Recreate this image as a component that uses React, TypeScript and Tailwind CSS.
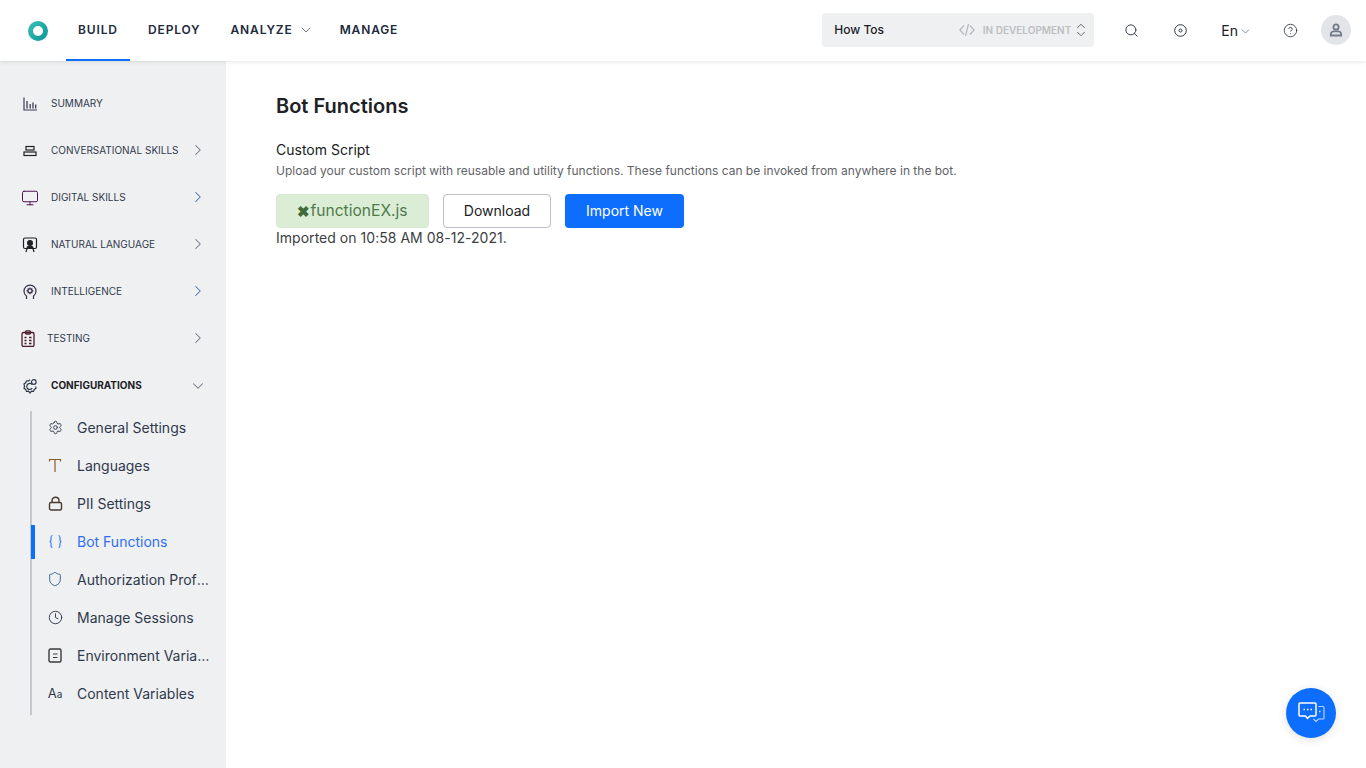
import React from "react";
import {
  ChevronDown,
  ChevronRight,
  ChevronUp,
  Clock,
  HelpCircle,
  Monitor,
  Search,
  Settings,
  Shield,
} from "lucide-react";

const stroke = { strokeWidth: 1.2, fill: "none", stroke: "currentColor" };

const SummaryIcon = () => (
  <svg width="16" height="16" viewBox="0 0 16 16" {...stroke}>
    <path d="M2 1.500V14h13" />
    <path d="M5 5v7.500M8.200 8v4.500M11 6.500v6M13.700 8.500v4" strokeWidth="1.300" />
  </svg>
);

const StackIcon = () => (
  <svg width="14" height="14" viewBox="0 0 14 14" {...stroke}>
    <rect x="3" y="2.500" width="8" height="3.500" />
    <rect x="1" y="8" width="12" height="3.500" />
  </svg>
);

const PresenterIcon = () => (
  <svg width="16" height="16" viewBox="0 0 16 16" {...stroke}>
    <rect x="1.500" y="1" width="13" height="10.500" rx="1.500" />
    <circle cx="8" cy="6" r="2.400" fill="currentColor" />
    <path d="M4 15 5 11.500M12 15 11 11.500" />
    <path d="M5 11.500c0-1.500 1.300-2.300 3-2.300s3 .8 3 2.300z" fill="currentColor" />
  </svg>
);

const HeadIcon = () => (
  <svg width="14" height="16" viewBox="0 0 14 16" {...stroke}>
    <path d="M3.500 15v-3C2 11 1 9.300 1 7.200 1 3.800 3.600 1.200 7 1.200s6 2.600 6 6c0 2.100-1 3.800-2.500 4.800v3" />
    <circle cx="7" cy="6.800" r="2" />
    <path d="M7 3.400v1.400M7 8.800v1.400M3.600 6.800H5M9 6.800h1.400M4.700 4.500l1 1M8.300 8.100l1 1M9.300 4.500l-1 1M5.700 8.100l-1 1" />
  </svg>
);

const ClipboardIcon = () => (
  <svg width="14" height="17" viewBox="0 0 14 17" strokeWidth="1.300" fill="none" stroke="currentColor">
    <rect x="1" y="2.500" width="12" height="14" rx="1.500" />
    <rect x="4.500" y="0.800" width="5" height="3.200" rx="1" />
    <path d="M3.500 7.500h2M8 7.500h2.500M3.500 10.500h2M8 10.500h2.500M3.500 13.500h2M8 13.500h2.500" />
  </svg>
);

const ConfigIcon = () => (
  <svg width="16" height="16" viewBox="0 0 16 16" {...stroke}>
    <path d="M8 1.800 6.500 3 4.500 2.800 3.700 4.800 2 6 2.500 8.200 2 10.200 3.700 11.400 4.500 13.400 6.500 13.200 8 15 9.500 13.200 11.500 13.400 12.300 11.400 14 10.200 13.700 8.500" />
    <path d="M10.200 6.700A3 3 0 1 0 10.200 10.200" />
    <circle cx="11.800" cy="4" r="2.300" />
  </svg>
);

const TallTIcon = () => (
  <svg width="16" height="16" viewBox="0 0 16 16" fill="none" stroke="currentColor" strokeWidth="1.200">
    <path d="M2.500 4.500V2.500h11v2M8 2.500v12.500" />
  </svg>
);

const LockIcon = () => (
  <svg width="15" height="15" viewBox="0 0 15 15" fill="none" stroke="currentColor" strokeWidth="1.400">
    <rect x="1.500" y="6.500" width="12" height="7.500" rx="1.500" />
    <path d="M4 6.500V4.700C4 2.700 5.500 1.200 7.500 1.200s3.500 1.500 3.500 3.500v1.800" />
  </svg>
);

const NoteIcon = () => (
  <svg width="14" height="15" viewBox="0 0 14 15" fill="none" stroke="currentColor" strokeWidth="1.400">
    <rect x="1" y="1" width="12" height="13" rx="1.500" />
    <path d="M5 6h4.500M5 9.500h4.500" strokeWidth="1.100" />
  </svg>
);

const BracesIcon = () => (
  <svg width="15" height="15" viewBox="0 0 15 15" fill="none" stroke="currentColor" strokeWidth="1.200">
    <path d="M4.500 1.500C3 1.500 3 2.500 3 3.500v2.300C3 6.600 2.500 7.500 1.500 7.500c1 0 1.500.9 1.500 1.700v2.300c0 1 0 2 1.500 2" />
    <path d="M10.500 1.500c1.500 0 1.500 1 1.500 2v2.300c0 .8.500 1.700 1.500 1.700-1 0-1.500.9-1.500 1.700v2.300c0 1 0 2-1.500 2" />
  </svg>
);

const LogoMark = () => (
  <svg width="20" height="20" viewBox="0 0 20 20">
    <defs>
      <linearGradient id="ring" x1="0" y1="0" x2="1" y2="1">
        <stop offset="0" stopColor="#35bcb4" />
        <stop offset="1" stopColor="#0d9a9c" />
      </linearGradient>
    </defs>
    <circle cx="10" cy="10" r="7.500" fill="none" stroke="url(#ring)" strokeWidth="5" />
  </svg>
);

const CodeIcon = () => (
  <svg width="16" height="14" viewBox="0 0 16 14" fill="none" stroke="currentColor" strokeWidth="1.200">
    <path d="M5 2.500.9 7 5 11.500M11 2.500 15.100 7 11 11.500M9.500 1 6.500 13" />
  </svg>
);

const DiscIcon = () => (
  <svg width="13" height="13" viewBox="0 0 13 13" fill="none" stroke="currentColor" strokeWidth="1">
    <circle cx="6.500" cy="6.500" r="5.800" />
    <circle cx="6.500" cy="6.500" r="1.500" />
  </svg>
);

const UserIcon = () => (
  <svg width="14" height="14" viewBox="0 0 14 14" fill="none" stroke="currentColor" strokeWidth="1.800">
    <circle cx="7" cy="4" r="2.600" />
    <path d="M1.800 12.500V11c0-1.500 1.500-2.700 3-2.700h4.400c1.500 0 3 1.200 3 2.700v1.500z" />
  </svg>
);

const ChatIcon = () => (
  <svg width="27" height="22" viewBox="0 0 27 22" fill="none" stroke="currentColor">
    <path d="M2 1h15a1 1 0 0 1 1 1v11a1 1 0 0 1-1 1h-5l-2.500 2.500L7.500 14H2a1 1 0 0 1-1-1V2a1 1 0 0 1 1-1z" strokeWidth="1.500" />
    <path d="M5.500 7.500h1.500M9 7.500h1.500M12.500 7.500H14" strokeWidth="1.500" />
    <path d="M20.500 4.500H25a1 1 0 0 1 1 1V16a1 1 0 0 1-1 1h-4.500L18 19.500 15.500 17" strokeWidth="1.200" opacity="0.7" />
    <path d="M21 9.500h1.500" strokeWidth="1.500" opacity="0.8" />
  </svg>
);

const mainItems = [
  { label: "SUMMARY", icon: <SummaryIcon />, color: "text-[#3a3f55]" },
  { label: "CONVERSATIONAL SKILLS", icon: <StackIcon />, arrow: "text-[#6b7280]", color: "text-[#202124]" },
  { label: "DIGITAL SKILLS", icon: <Monitor size={18} strokeWidth={1.3} />, arrow: "text-[#3f6fb5]", color: "text-[#4a0f4f]" },
  { label: "NATURAL LANGUAGE", icon: <PresenterIcon />, arrow: "text-[#6b7280]", color: "text-[#202124]" },
  { label: "INTELLIGENCE", icon: <HeadIcon />, arrow: "text-[#3f6fb5]", color: "text-[#3a3050]" },
  { label: "TESTING", icon: <ClipboardIcon />, arrow: "text-[#6b7280]", color: "text-[#4a1c28]", tight: true },
];

const subItems = [
  { label: "General Settings", icon: <Settings size={15} strokeWidth={1.5} /> },
  { label: "Languages", icon: <TallTIcon />, color: "text-[#8a5a2b]" },
  { label: "PII Settings", icon: <LockIcon />, color: "text-[#4a3a30]" },
  { label: "Bot Functions", icon: <BracesIcon />, active: true },
  { label: "Authorization Profiles", icon: <Shield size={16} strokeWidth={1.4} />, color: "text-[#2f5f8a]" },
  { label: "Manage Sessions", icon: <Clock size={15} strokeWidth={1.5} /> },
  { label: "Environment Variables", icon: <NoteIcon />, color: "text-[#3a3a3a]" },
  { label: "Content Variables", icon: <span className="text-[13px] leading-none">A<span className="text-[10px]">a</span></span> },
];

const Header = () => (
  <header className="relative z-10 flex h-[61px] shrink-0 items-center bg-white pl-[28px] pr-[15px] shadow-[0_1px_4px_rgba(0,0,0,0.1)]">
    <LogoMark />
    <nav className="ml-[18px] flex h-full items-center text-[12px] font-semibold tracking-[0.85px] text-[#202a3d]">
      <a className="flex h-full w-[64px] items-center justify-center border-b-2 border-[#0d6efd]">BUILD</a>
      <a className="mb-[2px] ml-[18px]">DEPLOY</a>
      <a className="mb-[2px] ml-[30px] flex items-center gap-[5px]">
        ANALYZE
        <ChevronDown size={16} strokeWidth={1.3} className="text-[#5f6b7a]" />
      </a>
      <a className="mb-[2px] ml-[26px]">MANAGE</a>
    </nav>
    <div className="ml-auto flex items-center pb-[1px]">
      <div className="flex h-[34px] w-[272px] items-center rounded-[4px] bg-[#eff0f1] pl-[12px] pr-[6px]">
        <span className="text-[12px] font-medium text-[#202124]">How Tos</span>
        <span className="ml-auto text-[#b5b7bb]"><CodeIcon /></span>
        <span className="ml-[8px] text-[10px] font-semibold text-[#bcbec2]">IN DEVELOPMENT</span>
        <span className="ml-[3px] flex flex-col text-[#55585e]">
          <ChevronUp size={14} strokeWidth={1.5} className="-mb-[3px]" />
          <ChevronDown size={14} strokeWidth={1.5} className="-mt-[3px]" />
        </span>
      </div>
      <Search size={15} strokeWidth={1.5} className="ml-[30px] text-[#2b3440]" />
      <span className="ml-[35px] text-[#2b3440]"><DiscIcon /></span>
      <span className="ml-[34px] flex items-center text-[14px] text-[#202124]">
        En
        <ChevronDown size={13} strokeWidth={1.4} className="ml-[1px] mt-[3px] text-[#5f6b7a]" />
      </span>
      <HelpCircle size={15} strokeWidth={1.3} className="ml-[31px] text-[#2b3440]" />
      <span className="ml-[23px] flex h-[30px] w-[30px] items-center justify-center rounded-full bg-[#e2e4e8] text-[#73798a]">
        <UserIcon />
      </span>
    </div>
  </header>
);

const Sidebar = () => (
  <aside className="w-[226px] shrink-0 bg-[#eff0f1] pt-[19px]">
    {mainItems.map((item) => (
      <div key={item.label} className="flex h-[47px] items-center pl-[21px] pr-[19px]">
        <span className={`flex w-[18px] justify-center ${item.tight ? "-ml-[2px]" : ""} ${item.color}`}>{item.icon}</span>
        <span className={`text-[10px] font-normal text-[#2f3a4d] ${item.tight ? "ml-[10px]" : "ml-[12px]"}`}>{item.label}</span>
        {item.arrow && <ChevronRight size={18} strokeWidth={1.35} className={`ml-auto -translate-y-[1px] ${item.arrow}`} />}
      </div>
    ))}
    <div className="flex h-[47px] items-center pl-[21px] pr-[19px]">
      <span className="flex w-[18px] justify-center text-[#2f3a4d]"><ConfigIcon /></span>
      <span className="ml-[12px] text-[10px] font-bold text-[#202124]">CONFIGURATIONS</span>
      <ChevronDown size={18} strokeWidth={1.35} className="ml-auto text-[#6b7280]" />
    </div>
    <div className="ml-[30px] mt-[2px] h-[304px] border-l-2 border-[#c5c7ca]">
      <div className="-translate-y-[3px]">
        {subItems.map((item) => (
          <div key={item.label} className="relative flex h-[38px] items-center pl-[15px] pr-[16px]">
            {item.active && <span className="absolute -left-[1px] top-[3px] h-[34px] w-[4px] bg-[#0d6efd]" />}
            <span className={`flex w-[16px] shrink-0 justify-center ${item.active ? "text-[#3f7ef0]" : item.color ?? "text-[#2f3a4d]"}`}>{item.icon}</span>
            <span className={`ml-[14px] truncate text-[14px] ${item.active ? "text-[#2f6fed]" : "text-[#2f3a4d]"}`}>{item.label}</span>
          </div>
        ))}
      </div>
    </div>
  </aside>
);

const Content = () => (
  <main className="flex-1 bg-white pl-[50px] pt-[33px]">
    <h1 className="text-[20px] font-semibold leading-[24px] text-[#202124]">Bot Functions</h1>
    <h2 className="mt-[22px] text-[14px] font-normal leading-[20px] text-[#202124]">Custom Script</h2>
    <p className="mt-[2px] text-[12px] leading-[18px] text-[#5f6368]">
      Upload your custom script with reusable and utility functions. These functions can be invoked from anywhere in the bot.
    </p>
    <div className="mt-[14px] flex items-center text-[14px]">
      <div className="flex h-[34px] w-[153px] items-center justify-center rounded-[4px] border border-[#d6e8cf] bg-[#dcedd6]">
        <span className="text-[15px] font-bold leading-none text-[#3f6b3a]">✖</span>
        <span className="text-[15.6px] text-[#4f7a4b]">functionEX.js</span>
      </div>
      <button className="ml-[14px] h-[34px] w-[108px] rounded-[4px] border border-[#bcbec6] bg-white pb-[1px] text-[#202124]">Download</button>
      <button className="ml-[14px] h-[34px] w-[119px] rounded-[4px] bg-[#0d6efd] pb-[1px] font-normal text-white">Import New</button>
    </div>
    <p className="text-[14px] leading-[20px] tracking-[0.03px] text-[#3c4043]">Imported on 10:58 AM 08-12-2021.</p>
  </main>
);

const App = () => {
  return (
    <div className="relative flex h-[768px] flex-col overflow-hidden bg-white font-['Inter',sans-serif]">
      <Header />
      <div className="flex flex-1">
        <Sidebar />
        <Content />
      </div>
      <button className="absolute bottom-[30px] right-[30px] flex h-[50px] w-[50px] items-center justify-center rounded-full bg-[#0d6efd] text-white shadow-[0_2px_10px_rgba(0,0,0,0.12)]">
        <ChatIcon />
      </button>
    </div>
  );
};

export default App;
